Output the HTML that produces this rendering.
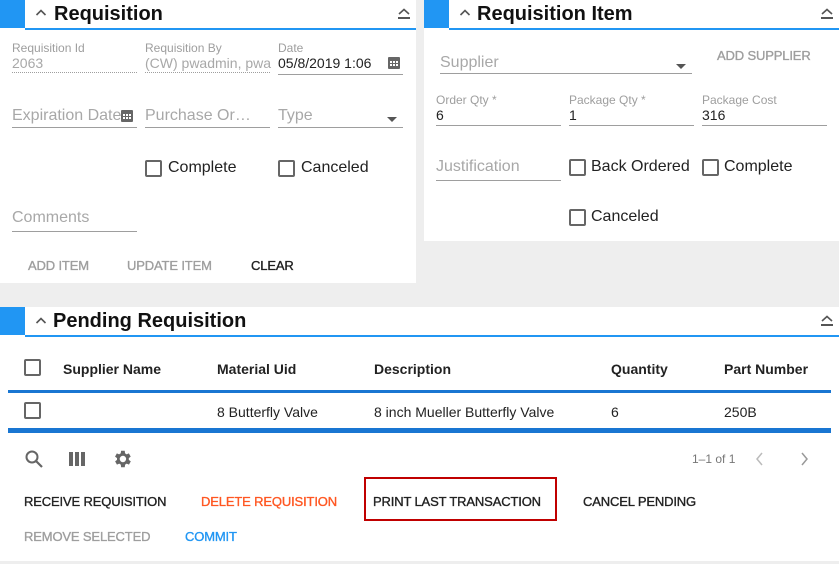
<!DOCTYPE html>
<html><head><style>
*{margin:0;padding:0;box-sizing:border-box}
body{width:839px;height:564px;background:#eeeeee;font-family:"Liberation Sans",Arial,sans-serif;position:relative;overflow:hidden}
.a{position:absolute;white-space:nowrap}
.panel{position:absolute;background:#fff}
.hb{position:absolute;background:#2196f3}
.title{position:absolute;font-weight:bold;font-size:20px;color:#111}
.lbl{font-size:12px;color:#9e9e9e}
.ph{font-size:16px;color:#a8a8a8}
.val{font-size:14px;color:#222}
.ln{position:absolute;height:1px;background:#9e9e9e}
.dot{position:absolute;border-bottom:1px dotted #9e9e9e}
.cb{position:absolute;width:17px;height:17px;border:2px solid #666;border-radius:2px}
.ck{font-size:16px;color:#222}
.btn{font-size:13px;letter-spacing:-0.15px;-webkit-text-stroke:0.35px currentColor}
.th{font-size:14px;font-weight:bold;color:#222}
.td{font-size:14px;color:#222}
.tri{position:absolute;width:0;height:0;border-left:5px solid transparent;border-right:5px solid transparent;border-top:5px solid #555}
</style></head><body>

<svg width="0" height="0" style="position:absolute"><defs>
<symbol id="chev" viewBox="0 0 12 8"><path d="M1.5 7 L6 2.5 L10.5 7" fill="none" stroke="#555" stroke-width="1.6"/></symbol>
<symbol id="col" viewBox="0 0 16 16"><path d="M3 9 L8 4.5 L13 9" fill="none" stroke="#555" stroke-width="1.6"/><rect x="2" y="12" width="12" height="2" fill="#555"/></symbol>
<symbol id="cal" viewBox="0 0 14 14"><rect x="1" y="1" width="12" height="12" rx="1" fill="#666"/><g fill="#fff"><rect x="3" y="5" width="2" height="2"/><rect x="6" y="5" width="2" height="2"/><rect x="9" y="5" width="2" height="2"/><rect x="3" y="8" width="2" height="2"/><rect x="6" y="8" width="2" height="2"/><rect x="9" y="8" width="2" height="2"/></g></symbol>
</defs></svg>

<!-- Left panel -->
<div class="panel" style="left:0;top:0;width:416px;height:283px"></div>
<div class="hb" style="left:0;top:0;width:25px;height:28px"></div>
<div class="hb" style="left:25px;top:28px;width:391px;height:2px"></div>
<svg class="a" style="left:35px;top:8px" width="12" height="8"><use href="#chev"/></svg>
<div class="a title" style="left:54px;top:3px">Requisition</div>
<svg class="a" style="left:396px;top:5px" width="16" height="16"><use href="#col"/></svg>

<div class="a lbl" style="left:12px;top:41px">Requisition Id</div>
<div class="a ph" style="left:12px;top:55px;font-size:14px">2063</div>
<div class="dot" style="left:12px;top:72px;width:125px"></div>
<div class="a lbl" style="left:145px;top:41px">Requisition By</div>
<div class="a ph" style="left:145px;top:55px;font-size:14px">(CW) pwadmin, pwa</div>
<div class="dot" style="left:145px;top:72px;width:125px"></div>
<div class="a lbl" style="left:278px;top:41px">Date</div>
<div class="a val" style="left:278px;top:55px">05/8/2019 1:06</div>
<svg class="a" style="left:387px;top:56px" width="14" height="14"><use href="#cal"/></svg>
<div class="ln" style="left:278px;top:74px;width:125px"></div>

<div class="a ph" style="left:12px;top:107px">Expiration Date</div>
<svg class="a" style="left:120px;top:109px" width="14" height="14"><use href="#cal"/></svg>
<div class="ln" style="left:12px;top:127px;width:125px"></div>
<div class="a ph" style="left:145px;top:107px">Purchase Or…</div>
<div class="ln" style="left:145px;top:127px;width:125px"></div>
<div class="a ph" style="left:278px;top:107px">Type</div>
<div class="tri" style="left:387px;top:117px"></div>
<div class="ln" style="left:278px;top:127px;width:125px"></div>

<div class="cb" style="left:145px;top:160px"></div>
<div class="a ck" style="left:168px;top:159px">Complete</div>
<div class="cb" style="left:278px;top:160px"></div>
<div class="a ck" style="left:301px;top:159px">Canceled</div>

<div class="a ph" style="left:12px;top:209px">Comments</div>
<div class="ln" style="left:12px;top:231px;width:125px"></div>

<div class="a btn" style="left:28px;top:258px;color:#9e9e9e">ADD ITEM</div>
<div class="a btn" style="left:127px;top:258px;color:#9e9e9e">UPDATE ITEM</div>
<div class="a btn" style="left:251px;top:258px;color:#222">CLEAR</div>

<!-- Right panel -->
<div class="panel" style="left:424px;top:0;width:415px;height:241px"></div>
<div class="hb" style="left:424px;top:0;width:25px;height:28px"></div>
<div class="hb" style="left:449px;top:28px;width:390px;height:2px"></div>
<svg class="a" style="left:459px;top:8px" width="12" height="8"><use href="#chev"/></svg>
<div class="a title" style="left:477px;top:3px">Requisition Item</div>
<svg class="a" style="left:819px;top:5px" width="16" height="16"><use href="#col"/></svg>

<div class="a ph" style="left:440px;top:54px">Supplier</div>
<div class="tri" style="left:676px;top:64px"></div>
<div class="ln" style="left:440px;top:73px;width:252px"></div>
<div class="a btn" style="left:717px;top:48px;color:#9e9e9e">ADD SUPPLIER</div>

<div class="a lbl" style="left:436px;top:93px">Order Qty *</div>
<div class="a val" style="left:436px;top:107px">6</div>
<div class="ln" style="left:436px;top:125px;width:125px"></div>
<div class="a lbl" style="left:569px;top:93px">Package Qty *</div>
<div class="a val" style="left:569px;top:107px">1</div>
<div class="ln" style="left:569px;top:125px;width:125px"></div>
<div class="a lbl" style="left:702px;top:93px">Package Cost</div>
<div class="a val" style="left:702px;top:107px">316</div>
<div class="ln" style="left:702px;top:125px;width:125px"></div>

<div class="a ph" style="left:436px;top:158px">Justification</div>
<div class="ln" style="left:436px;top:180px;width:125px"></div>
<div class="cb" style="left:569px;top:159px"></div>
<div class="a ck" style="left:591px;top:158px">Back Ordered</div>
<div class="cb" style="left:702px;top:159px"></div>
<div class="a ck" style="left:724px;top:158px">Complete</div>
<div class="cb" style="left:569px;top:209px"></div>
<div class="a ck" style="left:591px;top:208px">Canceled</div>

<!-- Bottom panel -->
<div class="panel" style="left:0;top:307px;width:839px;height:254px"></div>
<div class="hb" style="left:0;top:307px;width:25px;height:28px"></div>
<div class="hb" style="left:25px;top:335px;width:814px;height:2px"></div>
<svg class="a" style="left:35px;top:316px" width="12" height="8"><use href="#chev"/></svg>
<div class="a title" style="left:53px;top:310px">Pending Requisition</div>
<svg class="a" style="left:819px;top:312px" width="16" height="16"><use href="#col"/></svg>

<div class="cb" style="left:24px;top:359px"></div>
<div class="a th" style="left:63px;top:361px">Supplier Name</div>
<div class="a th" style="left:217px;top:361px">Material Uid</div>
<div class="a th" style="left:374px;top:361px">Description</div>
<div class="a th" style="left:611px;top:361px">Quantity</div>
<div class="a th" style="left:724px;top:361px">Part Number</div>
<div class="a" style="left:8px;top:390px;width:823px;height:3px;background:#1976d2"></div>
<div class="cb" style="left:24px;top:402px"></div>
<div class="a td" style="left:217px;top:404px">8 Butterfly Valve</div>
<div class="a td" style="left:374px;top:404px">8 inch Mueller Butterfly Valve</div>
<div class="a td" style="left:611px;top:404px">6</div>
<div class="a td" style="left:724px;top:404px">250B</div>
<div class="a" style="left:8px;top:428px;width:823px;height:5px;background:#1976d2"></div>

<svg class="a" style="left:24px;top:449px" width="20" height="20" viewBox="0 0 20 20"><circle cx="8" cy="8" r="5.5" fill="none" stroke="#666" stroke-width="2"/><line x1="12" y1="12" x2="18" y2="18" stroke="#666" stroke-width="2.2"/></svg>
<svg class="a" style="left:69px;top:451px" width="20" height="16"><rect x="0" y="1" width="4" height="14" fill="#666"/><rect x="6" y="1" width="4" height="14" fill="#666"/><rect x="12" y="1" width="4" height="14" fill="#666"/></svg>
<svg class="a" style="left:111px;top:448px" width="22" height="22" viewBox="0 0 24 24"><path fill="#666" d="M19.4 13a7.5 7.5 0 000-2l2.1-1.6-2-3.5-2.5 1a7 7 0 00-1.7-1L15 3h-4l-.4 2.9a7 7 0 00-1.7 1l-2.5-1-2 3.5L6.6 11a7.5 7.5 0 000 2l-2.1 1.6 2 3.5 2.5-1a7 7 0 001.7 1L11 21h4l.4-2.9a7 7 0 001.7-1l2.5 1 2-3.5zM13 15.5a3.5 3.5 0 110-7 3.5 3.5 0 010 7z"/></svg>
<div class="a" style="left:692px;top:452px;font-size:12px;color:#777">1–1 of 1</div>
<svg class="a" style="left:755px;top:451px" width="10" height="16"><path d="M7 2 L2 8 L7 14" fill="none" stroke="#bbb" stroke-width="1.5"/></svg>
<svg class="a" style="left:799px;top:451px" width="10" height="16"><path d="M3 2 L8 8 L3 14" fill="none" stroke="#999" stroke-width="1.5"/></svg>

<div class="a btn" style="left:24px;top:494px;color:#222">RECEIVE REQUISITION</div>
<div class="a btn" style="left:201px;top:494px;color:#ff5722">DELETE REQUISITION</div>
<div class="a" style="left:364px;top:477px;width:193px;height:44px;border:2px solid #c00000"></div>
<div class="a btn" style="left:373px;top:494px;color:#222">PRINT LAST TRANSACTION</div>
<div class="a btn" style="left:583px;top:494px;color:#222">CANCEL PENDING</div>
<div class="a btn" style="left:24px;top:529px;color:#9e9e9e">REMOVE SELECTED</div>
<div class="a btn" style="left:185px;top:529px;color:#2196f3">COMMIT</div>
</body></html>
